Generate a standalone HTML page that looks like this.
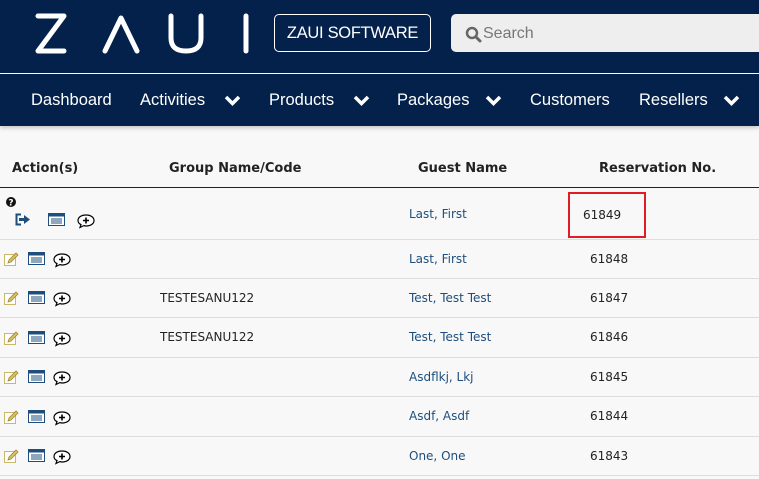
<!DOCTYPE html>
<html><head><style>
body{margin:0;width:759px;height:479px;overflow:hidden;background:#f8f8f8;font-family:"DejaVu Sans",Verdana,sans-serif;position:relative}
.top{position:absolute;left:0;top:0;width:759px;height:73px;background:#03214b;border-bottom:1px solid #fff}
.nav{position:absolute;left:0;top:74px;width:759px;height:52px;background:#03214b;box-shadow:0 2px 4px rgba(0,0,0,.2)}
.nav span{position:absolute;top:17px;color:#fff;font:16.5px "Liberation Sans",Arial,sans-serif}
.chev{position:absolute;top:21px}
.btn{position:absolute;left:274px;top:14px;width:157px;height:38px;border:1px solid #fff;border-radius:5px;box-sizing:border-box;color:#fff;font:16.5px "Liberation Sans",Arial,sans-serif;text-align:center;line-height:36px;letter-spacing:-0.3px}
.search{position:absolute;left:451px;top:14px;width:320px;height:38px;background:#eee;border-radius:5px;color:#777;font:16px "Liberation Sans",Arial,sans-serif;line-height:40px;text-indent:32px}
.th{position:absolute;top:161px;font-weight:bold;font-size:13px;color:#222}
.hl{position:absolute;left:0;width:759px;height:1px;background:#ddd}
.t{position:absolute;font-size:12px;color:#222}
.b{color:#1d4e7e}
</style></head><body>
<div class="top">
<svg style="position:absolute;left:35px;top:13px" width="215" height="42" viewBox="0 0 215 42" fill="none" stroke="#fff" stroke-width="5" stroke-linecap="round" stroke-linejoin="round">
<path d="M3 3H29L3 38H29"/><path d="M70 38L86 5L102 38"/><path d="M136 3V25Q136 38 151 38Q166 38 166 25V3"/><path d="M211 3V38"/></svg>
<div class="btn">ZAUI SOFTWARE</div>
<div class="search">Search<svg style="position:absolute;left:14px;top:12px" width="17" height="17" viewBox="0 0 17 17"><circle cx="7" cy="7" r="5" fill="none" stroke="#666" stroke-width="2.5"/><path d="M11 11L15 15" stroke="#666" stroke-width="3" stroke-linecap="round"/></svg></div>
</div>
<div class="nav">
<span style="left:31px">Dashboard</span>
<span style="left:140px">Activities</span>
<span style="left:269px">Products</span>
<span style="left:397px">Packages</span>
<span style="left:530px">Customers</span>
<span style="left:639px">Resellers</span>
<svg class="chev" style="left:224px" width="17" height="12"><path d="M2 2L8.5 8.5L15 2" stroke="#fff" stroke-width="3.5" fill="none"/></svg>
<svg class="chev" style="left:353px" width="17" height="12"><path d="M2 2L8.5 8.5L15 2" stroke="#fff" stroke-width="3.5" fill="none"/></svg>
<svg class="chev" style="left:485px" width="17" height="12"><path d="M2 2L8.5 8.5L15 2" stroke="#fff" stroke-width="3.5" fill="none"/></svg>
<svg class="chev" style="left:723px" width="17" height="12"><path d="M2 2L8.5 8.5L15 2" stroke="#fff" stroke-width="3.5" fill="none"/></svg>
</div>
<div class="th" style="left:12px">Action(s)</div>
<div class="th" style="left:169px">Group Name/Code</div>
<div class="th" style="left:418px">Guest Name</div>
<div class="th" style="left:599px">Reservation No.</div>
<div class="hl" style="top:187px;background:#222"></div>
<div style="position:absolute;left:568px;top:192px;width:78px;height:46px;border:2px solid #e01c24;box-sizing:border-box"></div>

<div class="hl" style="top:239px"></div>
<div class="hl" style="top:278px"></div>
<div class="hl" style="top:317px"></div>
<div class="hl" style="top:357px"></div>
<div class="hl" style="top:396px"></div>
<div class="hl" style="top:436px"></div>
<div class="hl" style="top:475px"></div>

<svg width="0" height="0" style="position:absolute"><defs>
<g id="list"><rect x="0.5" y="0.5" width="16" height="12" fill="#fff" stroke="#1d4e7e"/><rect x="0.5" y="0.5" width="16" height="3" fill="#1d4e7e"/><path d="M3 6H14M3 8H14M3 10H14" stroke="#1d4e7e"/></g>
<g id="chat"><path d="M9 1C4 1 1 3.5 1 6.5C1 8.5 2.5 10 4 10.5L3 13.5L7 11.5C7.5 11.8 8.3 12 9 12C14 12 17 9.5 17 6.5C17 3.5 14 1 9 1Z" fill="#fff" stroke="#000" stroke-width="1.2"/><path d="M9 3.5V9.5M6 6.5H12" stroke="#000" stroke-width="1.6"/></g>
<g id="edit"><rect x="0.5" y="2.5" width="11" height="11" fill="#fff" stroke="#c8b96a"/><path d="M4 11L5 8L12 1L14 3L7 10Z" fill="#d9c060" stroke="#a08a30" stroke-width="0.8"/></g>
</defs></svg>

<div class="t" style="left:6px;top:197px;font-weight:bold;font-size:11px"><svg width="10" height="10"><circle cx="5" cy="5" r="5" fill="#111"/><text x="5" y="8.5" font-size="9" font-weight="bold" fill="#fff" text-anchor="middle" font-family="DejaVu Sans">?</text></svg></div>
<svg style="position:absolute;left:15px;top:213px" width="17" height="13"><path d="M6 1.5H1.5V11.5H6" stroke="#1d4e7e" stroke-width="2" fill="none"/><path d="M4 5H9V2L15 6.5L9 11V8H4Z" fill="#1d4e7e"/></svg>
<svg style="position:absolute;left:48px;top:213px" width="18" height="14"><use href="#list"/></svg>
<svg style="position:absolute;left:77px;top:214px" width="18" height="15"><use href="#chat"/></svg>
<div class="t b" style="left:409px;top:207px">Last, First</div>
<div class="t" style="left:583px;top:208px">61849</div>

<svg style="position:absolute;left:4px;top:252px" width="16" height="15"><use href="#edit"/></svg>
<svg style="position:absolute;left:28px;top:252px" width="18" height="14"><use href="#list"/></svg>
<svg style="position:absolute;left:53px;top:253px" width="18" height="15"><use href="#chat"/></svg>
<div class="t b" style="left:409px;top:252px">Last, First</div>
<div class="t" style="left:590px;top:252px">61848</div>

<svg style="position:absolute;left:4px;top:291px" width="16" height="15"><use href="#edit"/></svg>
<svg style="position:absolute;left:28px;top:291px" width="18" height="14"><use href="#list"/></svg>
<svg style="position:absolute;left:53px;top:292px" width="18" height="15"><use href="#chat"/></svg>
<div class="t" style="left:160px;top:291px">TESTESANU122</div>
<div class="t b" style="left:409px;top:291px">Test, Test Test</div>
<div class="t" style="left:590px;top:291px">61847</div>

<svg style="position:absolute;left:4px;top:331px" width="16" height="15"><use href="#edit"/></svg>
<svg style="position:absolute;left:28px;top:331px" width="18" height="14"><use href="#list"/></svg>
<svg style="position:absolute;left:53px;top:332px" width="18" height="15"><use href="#chat"/></svg>
<div class="t" style="left:160px;top:330px">TESTESANU122</div>
<div class="t b" style="left:409px;top:330px">Test, Test Test</div>
<div class="t" style="left:590px;top:330px">61846</div>

<svg style="position:absolute;left:4px;top:370px" width="16" height="15"><use href="#edit"/></svg>
<svg style="position:absolute;left:28px;top:370px" width="18" height="14"><use href="#list"/></svg>
<svg style="position:absolute;left:53px;top:371px" width="18" height="15"><use href="#chat"/></svg>
<div class="t b" style="left:409px;top:370px">Asdflkj, Lkj</div>
<div class="t" style="left:590px;top:370px">61845</div>

<svg style="position:absolute;left:4px;top:410px" width="16" height="15"><use href="#edit"/></svg>
<svg style="position:absolute;left:28px;top:410px" width="18" height="14"><use href="#list"/></svg>
<svg style="position:absolute;left:53px;top:411px" width="18" height="15"><use href="#chat"/></svg>
<div class="t b" style="left:409px;top:409px">Asdf, Asdf</div>
<div class="t" style="left:590px;top:409px">61844</div>

<svg style="position:absolute;left:4px;top:449px" width="16" height="15"><use href="#edit"/></svg>
<svg style="position:absolute;left:28px;top:449px" width="18" height="14"><use href="#list"/></svg>
<svg style="position:absolute;left:53px;top:450px" width="18" height="15"><use href="#chat"/></svg>
<div class="t b" style="left:409px;top:449px">One, One</div>
<div class="t" style="left:590px;top:449px">61843</div>
</body></html>
